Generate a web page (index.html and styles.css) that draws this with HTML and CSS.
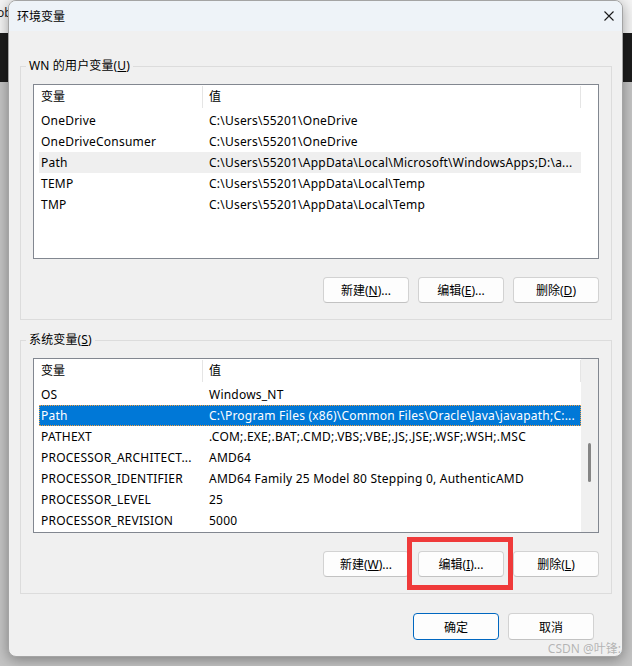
FILE: index.html
```html
<!DOCTYPE html>
<html lang="zh-CN">
  <head>
    <meta charset="UTF-8" />
    <meta name="viewport" content="width=device-width, initial-scale=1.0" />
    <title>环境变量</title>
    <link rel="stylesheet" href="styles.css">
  </head>
  <body>
    <span class="desk-text">ob</span>

    <div class="dialog">
      <div class="titlebar">
        <span class="title">环境变量</span>
        <svg class="close" width="10" height="10" viewBox="0 0 10 10">
          <path d="M0.5 0.5 L9.5 9.5 M9.5 0.5 L0.5 9.5" stroke="#1a1a1a" stroke-width="1.1" fill="none" />
        </svg>
      </div>

      <fieldset class="group first">
        <legend>WN 的用户变量(<u>U</u>)</legend>
        <div class="list">
          <div class="list-main">
            <div class="list-head">
              <span class="head-name">变量</span>
              <span class="head-value">值</span>
            </div>
            <div class="row"><span class="cell-name">OneDrive</span><span class="cell-value">C:\Users\55201\OneDrive</span></div>
            <div class="row"><span class="cell-name">OneDriveConsumer</span><span class="cell-value">C:\Users\55201\OneDrive</span></div>
            <div class="row hover"><span class="cell-name">Path</span><span class="cell-value">C:\Users\55201\AppData\Local\Microsoft\WindowsApps;D:\a...</span></div>
            <div class="row"><span class="cell-name">TEMP</span><span class="cell-value">C:\Users\55201\AppData\Local\Temp</span></div>
            <div class="row"><span class="cell-name">TMP</span><span class="cell-value">C:\Users\55201\AppData\Local\Temp</span></div>
          </div>
        </div>
        <div class="btn-row">
          <button>新建(<u>N</u>)...</button>
          <button>编辑(<u>E</u>)...</button>
          <button>删除(<u>D</u>)</button>
        </div>
      </fieldset>

      <fieldset class="group">
        <legend>系统变量(<u>S</u>)</legend>
        <div class="list">
          <div class="list-main">
            <div class="list-head">
              <span class="head-name">变量</span>
              <span class="head-value">值</span>
            </div>
            <div class="row"><span class="cell-name">OS</span><span class="cell-value">Windows_NT</span></div>
            <div class="row selected"><span class="cell-name">Path</span><span class="cell-value">C:\Program Files (x86)\Common Files\Oracle\Java\javapath;C:...</span></div>
            <div class="row"><span class="cell-name">PATHEXT</span><span class="cell-value">.COM;.EXE;.BAT;.CMD;.VBS;.VBE;.JS;.JSE;.WSF;.WSH;.MSC</span></div>
            <div class="row"><span class="cell-name">PROCESSOR_ARCHITECT...</span><span class="cell-value">AMD64</span></div>
            <div class="row"><span class="cell-name">PROCESSOR_IDENTIFIER</span><span class="cell-value">AMD64 Family 25 Model 80 Stepping 0, AuthenticAMD</span></div>
            <div class="row"><span class="cell-name">PROCESSOR_LEVEL</span><span class="cell-value">25</span></div>
            <div class="row"><span class="cell-name">PROCESSOR_REVISION</span><span class="cell-value">5000</span></div>
          </div>
          <div class="scrollbar"><div class="thumb"></div></div>
        </div>
        <div class="btn-row">
          <button>新建(<u>W</u>)...</button>
          <span class="marked">
            <button>编辑(<u>I</u>)...</button>
            <span class="annot"></span>
          </span>
          <button>删除(<u>L</u>)</button>
        </div>
      </fieldset>

      <div class="actions">
        <button class="default">确定</button>
        <button>取消</button>
      </div>

      <span class="watermark">CSDN @叶锋:</span>
    </div>
  </body>
</html>
```

FILE: styles.css
```css
body {
  margin: 0;
  height: 666px;
  overflow: hidden;
  position: relative;
  background: linear-gradient(#f4f4f4 0 33px, #1c1c1c 33px 82px, #c4c4c4 82px);
  font-family: "Noto Sans", "Noto Sans CJK SC", sans-serif;
  font-size: 12px;
  color: #000;
}
.desk-text {
  position: absolute;
  left: -3px;
  top: 4px;
  font-size: 12px;
  color: #222;
}
.dialog {
  position: relative;
  margin-left: 8px;
  width: 615px;
  height: 657px;
  box-sizing: border-box;
  border: 1px solid #a4a4a4;
  border-radius: 8px;
  background: #f0f0f0;
  overflow: hidden;
  box-shadow: 0 3px 14px rgba(0, 0, 0, 0.35);
}
.titlebar {
  height: 30px;
  background: #eef3f8;
  display: flex;
  align-items: center;
  justify-content: space-between;
  padding: 0 8px 0 8px;
}
.title {
  font-size: 12px;
}
.group {
  margin: 12px 10px 0 11px;
  padding: 0 0 16px 0;
  border: 1px solid #dcdcdc;
  min-width: 0;
}
.group.first {
  margin-top: 27px;
}
.group legend {
  margin-left: 5px;
  padding: 0 3px;
  line-height: 16px;
  letter-spacing: 0.15px;
}
.list {
  margin: 10px 12px 0 12px;
  height: 175px;
  box-sizing: border-box;
  border: 1px solid #828790;
  background: #fff;
  display: flex;
}
.list-main {
  flex: 1;
}
.list-head {
  width: 547px;
  height: 25px;
  box-sizing: border-box;
  padding: 1px 0 2px;
  display: flex;
}
.head-name,
.head-value {
  border-right: 1px solid #e5e5e5;
  line-height: 22px;
}
.head-name {
  width: 161px;
  padding-left: 7px;
}
.head-value {
  flex: 1;
  padding-left: 6px;
}
.row {
  margin-left: 5px;
  width: 542px;
  height: 21px;
  line-height: 21px;
  display: flex;
  white-space: nowrap;
  letter-spacing: 0.22px;
}
.row.hover {
  background: #efefef;
}
.row.selected {
  background: #0078d7;
  color: #fff;
  outline: 1px dotted #f5a040;
  outline-offset: -1px;
}
.cell-name {
  width: 166px;
  padding-left: 2px;
  overflow: hidden;
}
.cell-value {
  flex: 1;
  padding-left: 2px;
  overflow: hidden;
}
.scrollbar {
  width: 17px;
  background: #f0f0f0;
  display: flex;
  justify-content: center;
  padding-top: 84px;
  box-sizing: border-box;
}
.thumb {
  width: 3px;
  height: 39px;
  border-radius: 2px;
  background: #858585;
}
.btn-row {
  margin: 18px 12px 0 12px;
  display: flex;
  justify-content: flex-end;
  gap: 9px;
}
button {
  width: 86px;
  height: 26px;
  padding: 0;
  font-family: inherit;
  font-size: 12px;
  color: #000;
  background: #fdfdfd;
  border: 1px solid #d2d2d2;
  border-bottom-color: #c2c2c2;
  border-radius: 4px;
}
.marked {
  position: relative;
  display: flex;
}
.annot {
  position: absolute;
  top: -14px;
  left: -11px;
  right: -9px;
  bottom: -13px;
  border: 5px solid #ef3a3a;
}
.actions {
  margin: 19px 28px 0 0;
  display: flex;
  justify-content: flex-end;
  gap: 9px;
}
.actions button {
  width: 86px;
  height: 27px;
}
.actions .default {
  border: 1px solid #0067c0;
}
.watermark {
  position: absolute;
  right: 1px;
  bottom: 1px;
  line-height: 12px;
  font-size: 12px;
  color: rgba(140, 140, 140, 0.6);
}
```
